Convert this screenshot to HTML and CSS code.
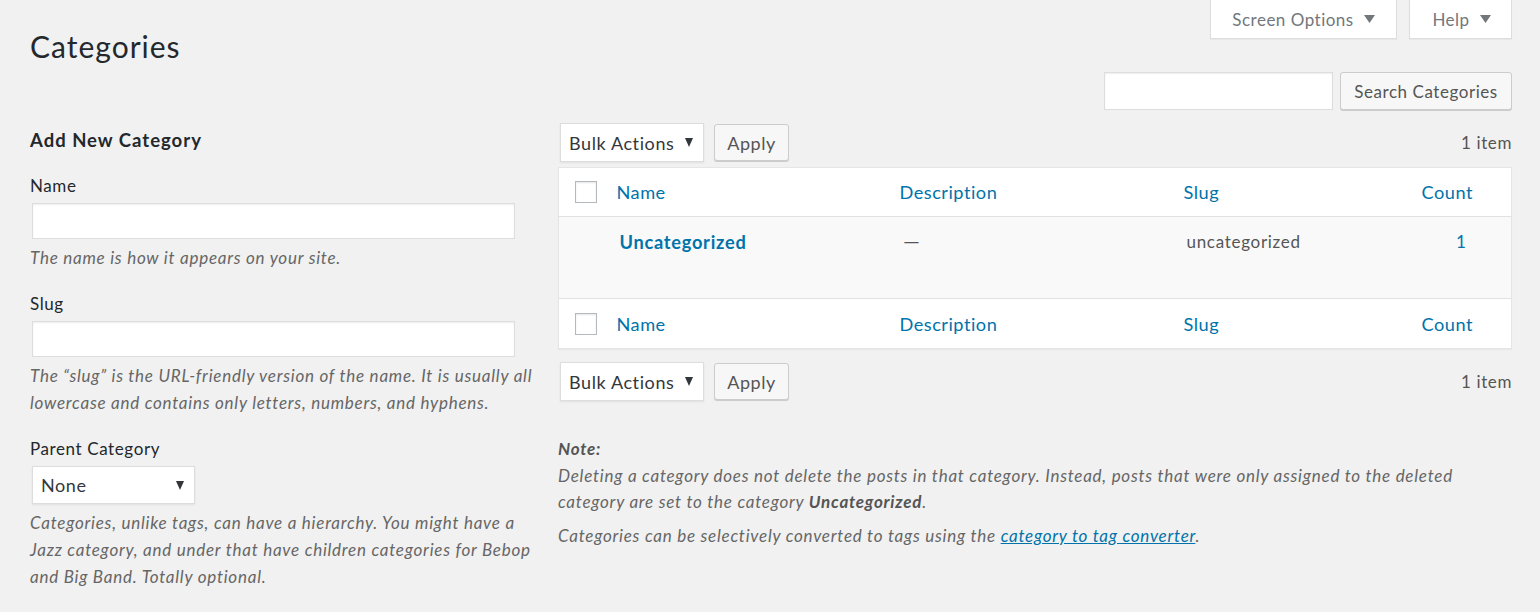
FILE: index.html
```html
<!DOCTYPE html>
<html lang="en">
<head>
<meta charset="utf-8">
<title>Categories</title>
<link rel="stylesheet" href="styles.css">
</head>
<body>
<header class="top">
  <h1 class="page-title">Categories</h1>
  <div class="top-right">
    <div class="screen-meta">
      <button class="meta-toggle meta-screen" type="button">Screen Options <svg class="tri" width="11" height="8" viewBox="0 0 11 8"><polygon points="0,0 11,0 5.5,8"/></svg></button>
      <button class="meta-toggle meta-help" type="button">Help <svg class="tri" width="11" height="8" viewBox="0 0 11 8"><polygon points="0,0 11,0 5.5,8"/></svg></button>
    </div>
    <form class="search-box">
      <input class="search-input" type="search" aria-label="Search Categories">
      <button class="button" type="button">Search Categories</button>
    </form>
  </div>
</header>

<main class="columns">
  <section class="col-left">
    <h2 class="form-title">Add New Category</h2>
    <div class="field">
      <label class="field-label">Name</label>
      <input class="text-input" type="text">
      <p class="desc">The name is how it appears on your site.</p>
    </div>
    <div class="field">
      <label class="field-label">Slug</label>
      <input class="text-input" type="text">
      <p class="desc">The “slug” is the URL-friendly version of the name. It is usually all lowercase and contains only letters, numbers, and hyphens.</p>
    </div>
    <div class="field">
      <label class="field-label">Parent Category</label>
      <div class="select select-parent"><span>None</span><svg class="sel-tri" width="8" height="9" viewBox="0 0 8 9"><polygon points="0,0 8,0 4,9"/></svg></div>
      <p class="desc">Categories, unlike tags, can have a hierarchy. You might have a Jazz category, and under that have children categories for Bebop and Big Band. Totally optional.</p>
    </div>
  </section>

  <section class="col-right">
    <div class="tablenav">
      <div class="select select-bulk"><span>Bulk Actions</span><svg class="sel-tri" width="8" height="9" viewBox="0 0 8 9"><polygon points="0,0 8,0 4,9"/></svg></div>
      <button class="button button-apply" type="button">Apply</button>
      <span class="count-items">1 item</span>
    </div>

    <table class="list-table">
      <colgroup>
        <col class="c-cb"><col class="c-name"><col class="c-desc"><col class="c-slug"><col class="c-count">
      </colgroup>
      <thead>
        <tr>
          <td class="cb"><span class="checkbox"></span></td>
          <th class="th-name"><a href="#">Name</a></th>
          <th><a href="#">Description</a></th>
          <th><a href="#">Slug</a></th>
          <th class="th-count"><a href="#"><span>Count</span><span class="sort-ind"></span></a></th>
        </tr>
      </thead>
      <tbody>
        <tr>
          <th class="cb"></th>
          <td class="td-name"><a class="row-title" href="#">Uncategorized</a><div class="row-actions">Edit | Quick Edit | View</div></td>
          <td class="td-desc"><span class="dash">—</span></td>
          <td class="td-slug">uncategorized</td>
          <td class="td-count"><a href="#">1</a></td>
        </tr>
      </tbody>
      <tfoot>
        <tr>
          <td class="cb"><span class="checkbox"></span></td>
          <th class="th-name"><a href="#">Name</a></th>
          <th><a href="#">Description</a></th>
          <th><a href="#">Slug</a></th>
          <th class="th-count"><a href="#"><span>Count</span><span class="sort-ind"></span></a></th>
        </tr>
      </tfoot>
    </table>

    <div class="tablenav tablenav-bottom">
      <div class="select select-bulk"><span>Bulk Actions</span><svg class="sel-tri" width="8" height="9" viewBox="0 0 8 9"><polygon points="0,0 8,0 4,9"/></svg></div>
      <button class="button button-apply" type="button">Apply</button>
      <span class="count-items">1 item</span>
    </div>

    <div class="note">
      <p><strong>Note:</strong><br>Deleting a category does not delete the posts in that category. Instead, posts that were only assigned to the deleted category are set to the category <strong>Uncategorized</strong>.</p>
      <p>Categories can be selectively converted to tags using the <a href="#">category to tag converter</a>.</p>
    </div>
  </section>
</main>
</body>
</html>
```

FILE: styles.css
```css
* { box-sizing: border-box; }

html, body {
  margin: 0;
  background: #f1f1f1;
}

body {
  font-family: "Lato", "Noto Sans", "Liberation Sans", sans-serif;
  font-size: 17px;
  letter-spacing: 0.6px;
  color: #444;
  width: 1540px;
  height: 612px;
  overflow: hidden;
}

a { color: #0073aa; text-decoration: none; }

/* ---------- header ---------- */
.top {
  display: flex;
  justify-content: space-between;
  align-items: flex-start;
  padding: 0 28px 0 30px;
}

.page-title {
  margin: 27px 0 0;
  font-size: 30px;
  line-height: 39px;
  font-weight: 400;
  letter-spacing: 1px;
  color: #23282d;
}

.top-right {
  display: flex;
  flex-direction: column;
  align-items: flex-end;
}

.screen-meta {
  display: flex;
  gap: 12px;
}

.meta-toggle {
  height: 39px;
  margin: 0;
  padding: 0;
  border: 1px solid #ddd;
  border-top: 0;
  background: #fff;
  box-shadow: 0 1px 1px rgba(0, 0, 0, .04);
  font-family: inherit;
  font-size: 17px;
  letter-spacing: 0.5px;
  color: #72777c;
  display: flex;
  align-items: center;
  justify-content: center;
  gap: 10px;
}

.meta-screen { width: 187px; }
.meta-help { width: 103px; padding-left: 2px; }

.tri { fill: #72777c; }

.search-box {
  display: flex;
  gap: 7px;
  margin-top: 33px;
}

.search-input {
  width: 229px;
  height: 38px;
  margin: 0;
  border: 1px solid #ddd;
  background: #fff;
  box-shadow: inset 0 1px 2px rgba(0, 0, 0, .07);
}

.button {
  height: 38px;
  margin: 0;
  padding: 0 12px;
  border: 1px solid #ccc;
  border-radius: 3px;
  background: #f7f7f7;
  box-shadow: 0 1px 0 #ccc;
  font-family: inherit;
  font-size: 17px;
  letter-spacing: 0.55px;
  color: #555;
}

.search-box .button { width: 172px; }

/* ---------- columns ---------- */
.columns {
  display: flex;
  gap: 17px;
  padding: 13px 28px 0 30px;
}

.col-left { width: 511px; flex: none; }
.col-right { flex: 1; }

.form-title {
  margin: 5px 0 0;
  font-size: 18.5px;
  line-height: 24px;
  font-weight: 700;
  letter-spacing: 1px;
  color: #23282d;
}

.field { margin-top: 19px; }
.form-title + .field { margin-top: 20px; }

.field-label {
  display: block;
  line-height: 27px;
  color: #23282d;
}

.text-input {
  display: block;
  width: 483px;
  height: 36px;
  margin: 4px 0 0 2px;
  border: 1px solid #ddd;
  background: #fff;
  box-shadow: inset 0 1px 2px rgba(0, 0, 0, .07);
}

.desc {
  margin: 5px 0 0;
  line-height: 27px;
  font-style: italic;
  letter-spacing: 0.75px;
  color: #666;
}

.select {
  position: relative;
  display: flex;
  align-items: center;
  justify-content: space-between;
  background: #fff;
  border: 1px solid #ddd;
  box-shadow: 0 1px 2px rgba(0, 0, 0, .07);
  color: #32373c;
  font-size: 18px;
}

.sel-tri { fill: #32373c; }

.select-parent {
  width: 163px;
  height: 38px;
  margin: 4px 0 0 2px;
  padding: 0 10px 0 8px;
}

.select-bulk {
  width: 144px;
  height: 39px;
  margin-left: 2px;
  padding: 0 10px 0 8px;
}

/* ---------- table nav ---------- */
.tablenav {
  display: flex;
  align-items: center;
  gap: 10px;
  height: 39px;
}

.button-apply {
  width: 75px;
  height: 37px;
  padding: 0;
  font-size: 18px;
}

.count-items {
  margin-left: auto;
  color: #555;
  font-size: 17px;
}

.tablenav-bottom { margin-top: 13px; }

/* ---------- table ---------- */
.list-table {
  width: 100%;
  margin-top: 5px;
  border-collapse: collapse;
  table-layout: fixed;
  background: #fff;
  border: 1px solid #e5e5e5;
  box-shadow: 0 1px 1px rgba(0, 0, 0, .04);
}

.c-cb { width: 48px; }
.c-name { width: 283px; }
.c-desc { width: 284px; }
.c-slug { width: 238px; }
.c-count { width: 100px; }

.list-table th,
.list-table td {
  padding: 0;
  text-align: left;
  font-weight: 400;
  vertical-align: middle;
}

.list-table thead tr { border-bottom: 1px solid #e1e1e1; }
.list-table tfoot tr { border-top: 1px solid #e1e1e1; }

.list-table thead th a,
.list-table tfoot th a {
  display: block;
  padding: 10px 10px;
  line-height: 28px;
  font-size: 18.2px;
  letter-spacing: 0.5px;
}

.list-table thead,
.list-table tfoot { height: 49px; }

.list-table tfoot tr { height: 50px; }

.cb { padding-left: 16px !important; }

.checkbox {
  display: block;
  width: 22px;
  height: 22px;
  border: 1px solid #b4b9be;
  background: #fff;
  box-shadow: inset 0 1px 2px rgba(0, 0, 0, .1);
}

.list-table .th-count a {
  display: flex;
  justify-content: center;
}

.sort-ind {
  display: inline-block;
  width: 29px;
}

.list-table tbody tr { background: #f9f9f9; }

.list-table tbody td {
  padding: 13px 13px 12px;
  vertical-align: top;
  line-height: 24px;
  color: #555;
  letter-spacing: 0.7px;
}

.row-title {
  font-weight: 700;
  font-size: 18.2px;
  letter-spacing: 0.75px;
}

.row-actions {
  visibility: hidden;
  padding-top: 4px;
  line-height: 27px;
}

.dash {
  display: inline-block;
  transform: scaleX(1.25);
  transform-origin: left center;
}

.list-table .td-count { text-align: center; padding-left: 10px; padding-right: 10px; }

/* ---------- note ---------- */
.note {
  margin-top: 35px;
  font-style: italic;
  letter-spacing: 0.75px;
  color: #666;
}

.note p {
  margin: 0;
  line-height: 26.5px;
}

.note p + p { margin-top: 7px; }

.note strong { color: #555; }

.note a { text-decoration: underline; }
```
